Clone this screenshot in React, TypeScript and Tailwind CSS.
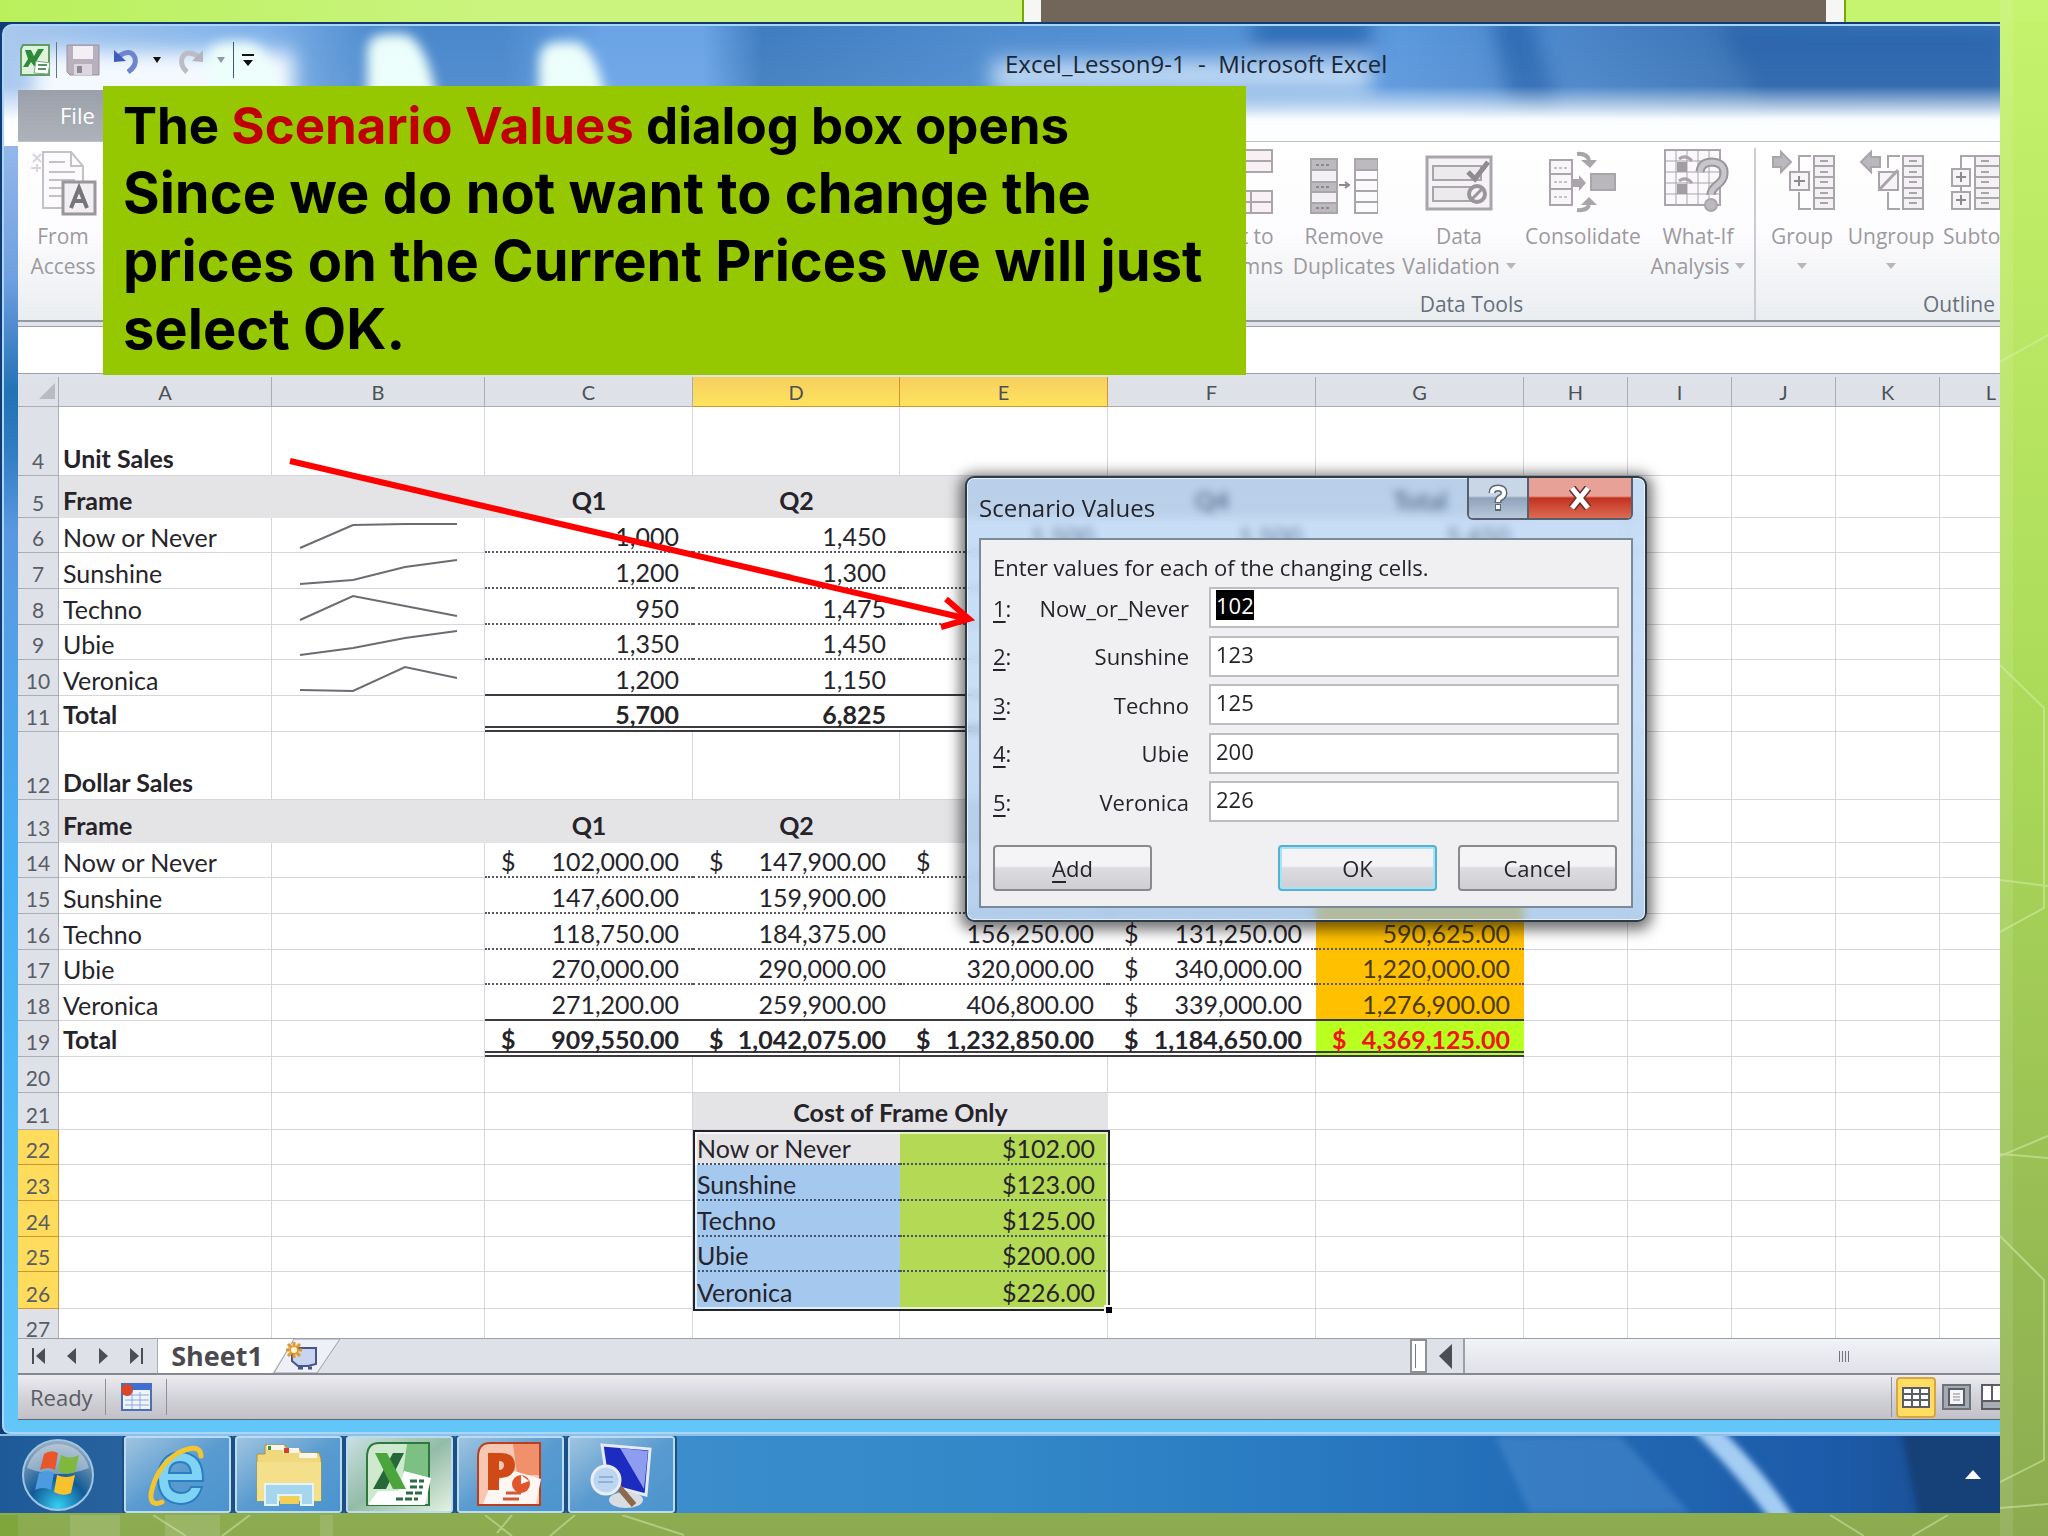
import { type ReactNode } from 'react';

type Row = {
    n: number;
    h: string;
    kind?: 'section' | 'head' | 'line' | 'total' | 'title' | 'cost';
    label?: string;
    cells?: string[];
    money?: boolean;
    spark?: string;
};

const columns = ['A', 'B', 'C', 'D', 'E', 'F', 'G', 'H', 'I', 'J', 'K', 'L'];

const rows: Row[] = [
    { n: 4, h: 'h-[69px]', kind: 'section', label: 'Unit Sales' },
    { n: 5, h: 'h-[42px]', kind: 'head', label: 'Frame', cells: ['Q1', 'Q2', '', 'Q4', 'Total'] },
    { n: 6, h: 'h-[35px]', kind: 'line', label: 'Now or Never', cells: ['1,000', '1,450', '1,500', '1,500', '5,450'], spark: '28,28 81,5 133,4 185,4' },
    { n: 7, h: 'h-[36px]', kind: 'line', label: 'Sunshine', cells: ['1,200', '1,300', '', '', ''], spark: '28,28 81,24 133,11 185,4' },
    { n: 8, h: 'h-[36px]', kind: 'line', label: 'Techno', cells: ['950', '1,475', '', '', ''], spark: '28,28 81,4 133,14 185,24' },
    { n: 9, h: 'h-[35px]', kind: 'line', label: 'Ubie', cells: ['1,350', '1,450', '', '', ''], spark: '28,28 81,21 133,11 185,4' },
    { n: 10, h: 'h-[36px]', kind: 'line', label: 'Veronica', cells: ['1,200', '1,150', '', '', ''], spark: '28,27 81,28 133,4 185,15' },
    { n: 11, h: 'h-[36px]', kind: 'total', label: 'Total', cells: ['5,700', '6,825', '', '', ''] },
    { n: 12, h: 'h-[68px]', kind: 'section', label: 'Dollar Sales' },
    { n: 13, h: 'h-[43px]', kind: 'head', label: 'Frame', cells: ['Q1', 'Q2', '', '', ''] },
    { n: 14, h: 'h-[35px]', kind: 'line', label: 'Now or Never', cells: ['$102,000.00', '$147,900.00', '$', '', ''], money: true },
    { n: 15, h: 'h-[36px]', kind: 'line', label: 'Sunshine', cells: ['147,600.00', '159,900.00', '', '', ''], money: true },
    { n: 16, h: 'h-[36px]', kind: 'line', label: 'Techno', cells: ['118,750.00', '184,375.00', '156,250.00', '$131,250.00', '590,625.00'], money: true },
    { n: 17, h: 'h-[35px]', kind: 'line', label: 'Ubie', cells: ['270,000.00', '290,000.00', '320,000.00', '$340,000.00', '1,220,000.00'], money: true },
    { n: 18, h: 'h-[36px]', kind: 'line', label: 'Veronica', cells: ['271,200.00', '259,900.00', '406,800.00', '$339,000.00', '1,276,900.00'], money: true },
    { n: 19, h: 'h-[36px]', kind: 'total', label: 'Total', cells: ['$909,550.00', '$1,042,075.00', '$1,232,850.00', '$1,184,650.00', '$4,369,125.00'], money: true },
    { n: 20, h: 'h-[36px]' },
    { n: 21, h: 'h-[37px]', kind: 'title', label: 'Cost of Frame Only' },
    { n: 22, h: 'h-[35px]', kind: 'cost', label: 'Now or Never', cells: ['$102.00'] },
    { n: 23, h: 'h-[36px]', kind: 'cost', label: 'Sunshine', cells: ['$123.00'] },
    { n: 24, h: 'h-[36px]', kind: 'cost', label: 'Techno', cells: ['$125.00'] },
    { n: 25, h: 'h-[35px]', kind: 'cost', label: 'Ubie', cells: ['$200.00'] },
    { n: 26, h: 'h-[37px]', kind: 'cost', label: 'Veronica', cells: ['$226.00'] },
    { n: 27, h: 'h-[35px]' },
];

const scenario = [
    { name: 'Now_or_Never', value: '102' },
    { name: 'Sunshine', value: '123' },
    { name: 'Techno', value: '125' },
    { name: 'Ubie', value: '200' },
    { name: 'Veronica', value: '226' },
];

const grid = 'border-r border-b border-[#d6d4dc]';

/* ---------- slide ---------- */

function SlideDecor() {
    return (
        <>
            <div className="absolute inset-x-0 top-0 flex h-[22px]">
                <div className="w-[1024px] border-r-2 border-[#78a800] bg-linear-to-r from-[#b9f05c] via-[#cbf47f] to-[#caf47d]"></div>
                <div className="w-[17px] bg-[#f6f6f4]"></div>
                <div className="w-[785px] bg-[#72665b]"></div>
                <div className="w-[18px] bg-[#f6f6f4]"></div>
                <div className="flex-1 border-l-2 border-[#78a800] bg-[#c6f370]"></div>
            </div>
            <svg className="absolute top-0 right-0 h-full w-12" viewBox="0 0 48 1536" preserveAspectRatio="none" fill="none">
                <rect width="13" height="1536" fill="#fff" opacity=".1" />
                <path d="M0 362 48 335M0 665 44 708V908L0 932M0 880 48 886M0 1156 48 1136M0 1154 48 1158M0 1236 44 1280V1460L0 1482M0 1508 48 1504" stroke="#d9efb0" strokeWidth="2" opacity=".5" />
            </svg>
            <svg className="absolute bottom-0 left-0 h-[21px] w-full" viewBox="0 0 2048 21" preserveAspectRatio="none" fill="none">
                <rect width="18" height="21" fill="#7fa63a" />
                <path d="M70 0H120V21H70zM165 0H220V21H165zM320 0H333V21H320z" fill="#fff" opacity=".12" />
                <path d="M153 0 186 21M250 0 222 21M485 0 512 21M512 0 497 18M575 0 550 21M622 0 684 20M1830 0 1864 21M1948 0 1912 21" stroke="#d5eab0" strokeWidth="2" opacity=".5" />
            </svg>
        </>
    );
}

function Note() {
    return (
        <div className="absolute top-[86px] left-[103px] w-[1143px] bg-[#95c800] px-5 pt-[7px] pb-[12px] font-['Inter',sans-serif] font-bold text-black">
            <p className="text-[51px] leading-[66px]">
                The <span className="text-[#c00000]">Scenario Values</span> dialog box opens
            </p>
            <p className="text-[56px] leading-[68px]">
                Since we do not want to change the
                <br />
                prices on the Current Prices we will just
                <br />
                select OK.
            </p>
        </div>
    );
}

function Arrow() {
    return (
        <svg className="pointer-events-none absolute top-[450px] left-[280px] h-[190px] w-[700px]" viewBox="0 0 700 190" fill="none" stroke="#fe0000" strokeWidth="6">
            <path d="M10 11 684 168M666 149 689 169 661 177" />
        </svg>
    );
}

/* ---------- window chrome ---------- */

function Glass() {
    return (
        <svg className="absolute inset-x-0 top-0 h-[120px] w-full" viewBox="0 0 2000 120" preserveAspectRatio="none">
            <defs>
                <filter id="soft" x="-20%" y="-40%" width="140%" height="180%">
                    <feGaussianBlur stdDeviation="10" />
                </filter>
                <filter id="glow" x="-20%" y="-40%" width="140%" height="180%">
                    <feGaussianBlur stdDeviation="6" />
                </filter>
                <linearGradient id="sky" x1="0" x2="1" y1="0" y2="0">
                    <stop offset="0" stopColor="#a9c8ee" />
                    <stop offset=".13" stopColor="#7fb2ea" />
                    <stop offset=".19" stopColor="#4a88cc" />
                    <stop offset=".25" stopColor="#4a88cc" />
                    <stop offset=".3" stopColor="#6aa4e6" />
                    <stop offset=".35" stopColor="#6aa4e6" />
                    <stop offset=".38" stopColor="#3f7cc0" />
                    <stop offset=".5" stopColor="#4f8dd0" />
                    <stop offset=".7" stopColor="#5a97dc" />
                    <stop offset=".87" stopColor="#3a74b6" />
                    <stop offset="1" stopColor="#3f7cc6" />
                </linearGradient>
                <linearGradient id="fade" x1="0" x2="0" y1="0" y2="1">
                    <stop offset="0" stopColor="#fff" stopOpacity="0" />
                    <stop offset=".5" stopColor="#f6fbff" stopOpacity=".05" />
                    <stop offset=".78" stopColor="#fafdff" />
                    <stop offset="1" stopColor="#fff" />
                </linearGradient>
            </defs>
            <rect width="2000" height="120" fill="url(#sky)" />
            <g filter="url(#soft)">
                <path d="M1720 0H2010V85H1760z" fill="#2a65ac" />
                <path d="M1250 -10H1370V20H1250zM1490 -10H1530L1560 85H1510z" fill="#2f6cb4" />
                <path d="M30 26H290V130H30z" fill="#f4f9ff" />
                <path d="M990 34H1370V66H990z" fill="#d3e6fa" opacity=".8" />
            </g>
            <g filter="url(#glow)" fill="#ecfefb">
                <path d="M205 130V30Q205 16 230 16H245Q278 22 284 130z" />
                <path d="M364 130V26Q364 8 384 8H402Q434 20 438 130z" />
                <path d="M536 130V36Q536 16 556 16H574Q604 28 608 130z" />
            </g>
            <rect width="2000" height="120" fill="url(#fade)" />
        </svg>
    );
}

function TitleBar() {
    return (
        <div className="relative flex h-[64px] items-center pt-1 pl-0.5">
            <svg className="h-8 w-8" viewBox="0 0 32 32">
                <path d="M3 1H29V31H1V5z" fill="#dff2dc" stroke="#5f9c66" strokeWidth="2" />
                <path d="M5 6H11L14 12 18 5H24L17 16 20 22H14L11 18 8 23H3L8 15z" fill="#2f8a3c" />
                <path d="M16 17 30 19 28 30 14 29z" fill="#fff" stroke="#7cab80" />
                <path d="M18 21H27M18 25H26" stroke="#58925e" strokeWidth="2" />
            </svg>
            <span className="mx-1 h-9 w-px bg-slate-500"></span>
            <button aria-label="Save" className="ml-1">
                <svg className="h-8 w-9" viewBox="0 0 36 32">
                    <path d="M2 1H34V31H5L2 28z" fill="#b9b0bd" stroke="#9a929f" />
                    <path d="M8 2H28V15H8z" fill="#f3f0f5" />
                    <path d="M9 20H27V31H9z" fill="#dcd6e0" />
                    <path d="M12 22H17V29H12z" fill="#8f8795" />
                </svg>
            </button>
            <button aria-label="Undo" className="ml-3 flex items-center gap-3">
                <svg className="h-8 w-7" viewBox="0 0 28 32" fill="none">
                    <path d="M6 12Q18 4 22 14 24 22 15 28" stroke="#6d84cf" strokeWidth="5" />
                    <path d="M1 6V18L13 17z" fill="#3f5cba" />
                </svg>
                <svg className="h-2 w-2" viewBox="0 0 8 8"><path d="M0 1H8L4 7z" fill="#111" /></svg>
            </button>
            <button aria-label="Redo" className="ml-4 flex items-center gap-3">
                <svg className="h-8 w-7" viewBox="0 0 28 32" fill="none">
                    <path d="M21 12Q9 5 5 14 3 22 10 28" stroke="#bcbcc6" strokeWidth="5" />
                    <path d="M26 6V18L15 17z" fill="#b4b4be" />
                </svg>
                <svg className="h-2 w-2" viewBox="0 0 8 8"><path d="M0 1H8L4 7z" fill="#8d9aa8" /></svg>
            </button>
            <span className="ml-2 h-9 w-px bg-slate-600"></span>
            <button aria-label="Customize Quick Access Toolbar" className="ml-2">
                <svg className="h-4 w-3" viewBox="0 0 12 16"><path d="M0 2H12V4H0zM1 8H11L6 14z" fill="#111" /></svg>
            </button>
            <h1 className="ml-[751px] pt-2 font-['Open_Sans',sans-serif] text-[24px] leading-8 whitespace-pre text-[#1c2634]">Excel_Lesson9-1  -  Microsoft Excel</h1>
        </div>
    );
}

function RibbonItem({ width, icon, line1, line2, arrow }: { width: string; icon: ReactNode; line1: string; line2?: string; arrow?: boolean }) {
    return (
        <button className={`${width} flex shrink-0 flex-col items-center whitespace-nowrap`}>
            <svg className="h-[68px] w-[68px]" viewBox="0 0 68 68" fill="none" stroke="#a9a5ab" strokeWidth="2">
                {icon}
            </svg>
            <span className="mt-[5px] text-[21px] leading-[30px]">{line1}</span>
            <span className="flex h-[30px] items-center gap-[6px] text-[21px] leading-[30px]">
                {line2}
                {arrow && (
                    <svg className="h-[6px] w-[10px]" viewBox="0 0 10 6"><path d="M0 0H10L5 6z" fill="#b7b7bb" /></svg>
                )}
            </span>
        </button>
    );
}

const outlineColumn = (
    <>
        <path d="M46 8H66V61H46z" fill="#f3f1f4" />
        <path d="M46 18H66M46 29H66M46 40H66M46 50H66M52 13H60M52 24H60M52 34H60M52 45H60M52 55H60" />
    </>
);

function Ribbon() {
    return (
        <div className="flex h-[181px] overflow-hidden border-t border-b-2 border-t-[#bcc2ca] border-b-[#94999f] bg-linear-to-b from-white via-[#fdfcfe] to-[#eaedf0] pt-[6px] font-['Open_Sans',sans-serif] text-[#9c9a9e]">
            <div className="w-[1171px] shrink-0">
                <RibbonItem
                    width="w-[90px]"
                    line1="From"
                    line2="Access"
                    icon={
                        <>
                            <path d="M14 4H42L54 18V60H14z" fill="#fbfafc" stroke="#c4c0c6" />
                            <path d="M42 4V18H54M20 14H36M20 24H46M20 32H46M20 40H40M20 48H36" stroke="#c4c0c6" />
                            <path d="M4 6 12 14M12 6 4 14M2 20H12M8 16V24" stroke="#d8d4da" />
                            <path d="M34 34H66V66H34z" fill="#f1eff2" stroke="#9a969c" strokeWidth="3" />
                            <path d="M42 60 50 40 58 60M45 53H55" stroke="#77747a" strokeWidth="4" />
                        </>
                    }
                />
            </div>
            <div className="flex w-[567px] shrink-0 flex-col border-r-2 border-[#c9ccd2]">
                <div className="flex h-[141px]">
                    <RibbonItem
                        width="w-[102px]"
                        line1="Text to"
                        line2="Columns"
                        icon={
                            <>
                                <path d="M4 2H66V24H4zM4 43H66V65H4z" fill="#f8f0f3" />
                                <path d="M4 13H66M4 54H66M24 43V65M45 43V65M34 26V38M30 34 34 39 38 34" />
                            </>
                        }
                    />
                    <RibbonItem
                        width="w-[106px]"
                        line1="Remove"
                        line2="Duplicates"
                        icon={
                            <>
                                <path d="M1 11H27V65H1z" fill="#f2f0f3" />
                                <path d="M1 11H27V22H1zM1 34H27V44H1zM1 55H27V65H1z" fill="#bdbabf" />
                                <path d="M6 17H21M6 39H21M6 60H21" stroke="#8d898f" strokeDasharray="3 2" />
                                <path d="M45 11H68V65H45z" fill="#fbfafc" />
                                <path d="M45 11H68V22H45z" fill="#bdbabf" />
                                <path d="M45 32H68M45 43H68M45 54H68" />
                                <path d="M29 37H38M35 34 39 37 35 40" stroke="#8d898f" />
                            </>
                        }
                    />
                    <RibbonItem
                        width="w-[124px]"
                        line1="Data"
                        line2="Validation"
                        arrow
                        icon={
                            <>
                                <path d="M2 9H66V61H2z" fill="#f4f2f5" strokeWidth="3" />
                                <path d="M8 18H56V32H8zM8 39H46V53H8z" fill="#eceaed" />
                                <path d="M43 24 50 31 63 14" stroke="#8f8b91" strokeWidth="5" />
                                <circle cx="52" cy="46" r="8" stroke="#99959b" strokeWidth="4" fill="#f4f2f5" />
                                <path d="M47 51 57 41" stroke="#99959b" strokeWidth="3" />
                            </>
                        }
                    />
                    <RibbonItem
                        width="w-[124px]"
                        line1="Consolidate"
                        icon={
                            <>
                                <path d="M1 12H23V57H1z" fill="#f8f6f9" />
                                <path d="M1 26H23M1 41H23" />
                                <path d="M5 20H18M5 34H18M5 49H18" strokeDasharray="3 2" stroke="#c6c2c8" />
                                <path d="M24 31H30V27L37 35 30 43V39H24z" fill="#a9a5ab" stroke="none" />
                                <path d="M42 26H66V42H42z" fill="#bab7bc" />
                                <path d="M28 6Q38 5 40 12" strokeWidth="4" />
                                <path d="M32 12H48L41 20z" fill="#a9a5ab" stroke="none" />
                                <path d="M28 62Q38 63 40 57" strokeWidth="4" />
                                <path d="M32 57H48L40 49z" fill="#a9a5ab" stroke="none" />
                            </>
                        }
                    />
                    <RibbonItem
                        width="w-[106px]"
                        line1="What-If"
                        line2="Analysis"
                        arrow
                        icon={
                            <>
                                <path d="M1 2H56V57H1z" fill="#faf8fb" />
                                <path d="M1 13H56M1 24H56M1 35H56M1 46H56M12 2V57M23 2V57M34 2V57M45 2V57" strokeWidth="1" />
                                <path d="M13 14H23V24H13zM13 36H23V46H13z" fill="#a19da3" stroke="none" />
                                <path d="M15 11Q22 6 28 13M15 33Q22 28 28 35" strokeWidth="3" />
                                <path d="M36 24Q37 14 48 14 61 15 60 26 60 32 52 38 47 42 47 47" stroke="#99959b" strokeWidth="9" />
                                <path d="M36 24Q37 14 48 14 61 15 60 26 60 32 52 38 47 42 47 47" stroke="#c9c6cb" strokeWidth="5" />
                                <circle cx="47" cy="57" r="6" fill="#bcb9be" />
                            </>
                        }
                    />
                </div>
                <span className="text-center text-[21px] leading-[30px] text-[#66707c]">Data Tools</span>
            </div>
            <div className="flex w-[406px] shrink-0 flex-col">
                <div className="flex h-[141px] pl-[3px]">
                    <RibbonItem
                        width="w-[86px]"
                        line1="Group"
                        arrow
                        icon={
                            <>
                                <path d="M5 9H13V4L23 14 13 24V19H5z" fill="#bbb8bd" />
                                <path d="M43 8H31V24M31 44V61H43" />
                                <path d="M22 24H41V42H22z" fill="#f6f4f7" />
                                <path d="M26 33H37M31 28V38" stroke="#8d898f" />
                                {outlineColumn}
                            </>
                        }
                    />
                    <RibbonItem
                        width="w-[92px]"
                        line1="Ungroup"
                        arrow
                        icon={
                            <>
                                <path d="M23 9H14V4L4 14 14 24V19H23z" fill="#bbb8bd" />
                                <path d="M43 8H31V20M31 44V61H43" />
                                <path d="M22 24H41V42H22z" fill="#f6f4f7" />
                                <path d="M22 42 41 22" strokeWidth="3" />
                                {outlineColumn}
                            </>
                        }
                    />
                    <RibbonItem
                        width="w-[94px]"
                        line1="Subtotal"
                        icon={
                            <>
                                <path d="M24 8H11V60" />
                                <path d="M2 21H20V38H2zM2 44H20V61H2z" fill="#f6f4f7" />
                                <path d="M6 29H16M11 24V34M6 52H16M11 47V57" stroke="#8d898f" />
                                <path d="M25 8H50V61H25z" fill="#f3f1f4" />
                                <path d="M25 18H50M25 29H50M25 40H50M25 50H50M31 13H39M31 24H39M31 34H39M31 45H39M31 55H39" />
                            </>
                        }
                    />
                </div>
                <span className="text-center text-[21px] leading-[30px] text-[#66707c]">Outline</span>
            </div>
        </div>
    );
}

/* ---------- sheet ---------- */

function Amount({ text }: { text: string }) {
    const dollar = text.startsWith('$');
    return (
        <div className="flex justify-between pl-4">
            <span>{dollar ? '$' : ''}</span>
            <span>{dollar ? text.slice(1) : text}</span>
        </div>
    );
}

function RowCells({ row }: { row: Row }) {
    const { kind, label, cells = [], money, spark } = row;

    if (kind === 'title') {
        return (
            <>
                {columns.slice(0, 3).map((c) => <td key={c} className={grid}></td>)}
                <td colSpan={2} className="border-b border-[#d6d4dc] bg-[#e4e3e6] pb-0.5 text-center font-bold">{label}</td>
                {columns.slice(5).map((c) => <td key={c} className={grid}></td>)}
            </>
        );
    }

    if (kind === 'cost') {
        const first = row.n === 22;
        const edge = row.n === 26 ? 'pb-0.5' : 'border-b-2 border-dotted border-[#44566a]';
        return (
            <>
                {columns.slice(0, 3).map((c) => <td key={c} className={grid}></td>)}
                <td className={`relative pl-[4px] ${edge} ${first ? 'bg-[#e4e3e6]' : 'bg-[#a4c8ee]'}`}>
                    {label}
                    {first && (
                        <span className="pointer-events-none absolute top-0 left-0 z-10 h-[181px] w-[417px] border-2 border-[#22222a] shadow-[inset_0_0_0_2px_#ffffffaa]">
                            <span className="absolute -right-1 -bottom-1 h-2 w-2 border-t-2 border-l-2 border-white bg-black"></span>
                        </span>
                    )}
                </td>
                <td className={`bg-[#b4da55] pr-[13px] text-right ${edge}`}>{cells[0]}</td>
                {columns.slice(5).map((c) => <td key={c} className={grid}></td>)}
            </>
        );
    }

    if (kind === 'head') {
        return (
            <>
                <td className="bg-[#e4e3e6] pb-[3px] pl-[4px] font-bold">{label}</td>
                <td className="bg-[#e4e3e6]"></td>
                {cells.map((c, i) => <td key={i} className="bg-[#e4e3e6] pb-[3px] text-center font-bold">{c}</td>)}
                {columns.slice(7).map((c) => <td key={c} className={grid}></td>)}
            </>
        );
    }

    if (kind === 'line' || kind === 'total') {
        const total = kind === 'total';
        const solid = row.n === 10 || row.n === 18;
        const line = total
            ? 'border-b-[6px] border-double border-[#3c393f] leading-[23px] font-bold'
            : solid
              ? 'border-b-2 border-[#3c393f]'
              : 'border-b-2 border-dotted border-[#5a585e]';
        return (
            <>
                <td className={`${grid} pl-[4px] ${total ? 'pb-0.5 font-bold' : ''}`}>{label}</td>
                <td className={grid}>
                    {spark && (
                        <svg className="block h-[32px] w-[212px]" viewBox="0 0 212 32" fill="none">
                            <polyline points={spark} stroke="#6d6b72" strokeWidth="2" />
                        </svg>
                    )}
                </td>
                {cells.map((c, i) => {
                    const fill = money && i === 4 ? (total ? 'bg-[#b9ff1f] text-[#f01414]' : 'bg-[#ffc000] text-[#4a3a10]') : '';
                    return (
                        <td key={i} className={`${line} ${fill} pr-[14px] text-right`}>
                            {money ? <Amount text={c} /> : c}
                        </td>
                    );
                })}
                {columns.slice(7).map((c) => <td key={c} className={grid}></td>)}
            </>
        );
    }

    return (
        <>
            {columns.map((c, i) => (
                <td key={c} className={`${grid} ${i === 0 ? 'pb-0.5 pl-[4px] font-bold whitespace-nowrap' : ''}`}>{i === 0 ? label : ''}</td>
            ))}
        </>
    );
}

function Sheet() {
    return (
        <div className="overflow-hidden bg-white">
            <table className="w-full min-w-[2025px] table-fixed border-separate border-spacing-0 font-['Lato',sans-serif] text-[25px] leading-[29px] text-[#26242a]">
                <colgroup>
                    <col className="w-[41px]" />
                    <col className="w-[213px]" />
                    <col className="w-[213px]" />
                    <col className="w-[208px]" />
                    <col className="w-[207px]" />
                    <col className="w-[208px]" />
                    <col className="w-[208px]" />
                    <col className="w-[208px]" />
                    <col className="w-[104px]" />
                    <col className="w-[104px]" />
                    <col className="w-[104px]" />
                    <col className="w-[104px]" />
                    <col />
                </colgroup>
                <thead>
                    <tr className="h-[30px] text-[20px] leading-[26px] text-[#4c5158]">
                        <th className="border-r border-b border-[#a9adb5] bg-[#dfe1e8] p-0">
                            <svg className="ml-auto h-[18px] w-[20px]" viewBox="0 0 20 18"><path d="M17 0V16H1z" fill="#b8bbc3" /></svg>
                        </th>
                        {columns.map((c) => (
                            <th
                                key={c}
                                scope="col"
                                className={`border-r border-b p-0 font-normal ${c === 'D' || c === 'E' ? 'border-[#d3942f] bg-linear-to-b from-[#f6cf5f] to-[#ffe45f]' : 'border-[#a9adb5] bg-[#dfe1e8]'}`}
                            >
                                {c}
                            </th>
                        ))}
                    </tr>
                </thead>
                <tbody>
                    {rows.map((row) => (
                        <tr key={row.n} className={`${row.h} [&>td]:align-bottom`}>
                            <th
                                scope="row"
                                className={`border-r border-b p-0 text-center align-bottom text-[21px] font-normal text-[#585d66] ${row.n > 21 && row.n < 27 ? 'border-[#d3942f] bg-[#ffdc5c]' : 'border-[#a9adb5] bg-[#dfe1e8]'}`}
                            >
                                {row.n}
                            </th>
                            <RowCells row={row} />
                        </tr>
                    ))}
                </tbody>
            </table>
        </div>
    );
}

function SheetTabs() {
    return (
        <div className="relative -mt-[6px] flex h-[37px] overflow-hidden border-t border-b-2 border-t-[#9b9fa8] border-b-[#85888f] bg-[#dee1e8]">
            <div className="flex w-[140px] shrink-0 items-center justify-around border-r border-[#a9adb5] px-1">
                <button aria-label="First sheet"><svg className="h-4 w-3.5" viewBox="0 0 14 16"><path d="M0 0H2V16H0zM13 0V16L4 8z" fill="#4b4e55" /></svg></button>
                <button aria-label="Previous sheet"><svg className="h-4 w-2.5" viewBox="0 0 10 16"><path d="M9 0V16L0 8z" fill="#4b4e55" /></svg></button>
                <button aria-label="Next sheet"><svg className="h-4 w-2.5" viewBox="0 0 10 16"><path d="M1 0V16L10 8z" fill="#4b4e55" /></svg></button>
                <button aria-label="Last sheet"><svg className="h-4 w-3.5" viewBox="0 0 14 16"><path d="M12 0H14V16H12zM1 0V16L10 8z" fill="#4b4e55" /></svg></button>
            </div>
            <button className="w-[114px] shrink-0 bg-white pl-1 font-['Open_Sans',sans-serif] text-[27px] leading-[32px] font-bold text-[#4a4a50]">Sheet1</button>
            <button aria-label="Insert worksheet" className="shrink-0">
                <svg className="h-[34px] w-[70px]" viewBox="0 0 70 34" fill="none">
                    <path d="M22 0 0 34V0z" fill="#fff" />
                    <path d="M22 0 2 34H45L68 0z" fill="#eef0f6" stroke="#9b9fa8" />
                    <path d="M20 9H44V25L36 27H26L20 22z" fill="#c9d5ef" stroke="#46558c" strokeWidth="2" />
                    <path d="M26 29H31M36 29H40" stroke="#46558c" strokeWidth="3" />
                    <path d="M22 3V19M14 11H30M16 5 28 17M28 5 16 17" stroke="#e09a2c" strokeWidth="3" />
                    <circle cx="22" cy="11" r="3" fill="#fff6d6" />
                </svg>
            </button>
            <div className="w-[1068px] shrink-0"></div>
            <div className="w-[17px] shrink-0 border-2 border-[#8e9096] bg-white p-[3px]">
                <div className="h-full w-px bg-[#77797f]"></div>
            </div>
            <button aria-label="Scroll left" className="flex w-[36px] shrink-0 items-center justify-center">
                <svg className="h-[25px] w-[13px]" viewBox="0 0 13 25"><path d="M13 0V25L0 12z" fill="#4b4e55" /></svg>
            </button>
            <div className="flex flex-1 items-center border-l-2 border-[#9b9fa8] bg-linear-to-b from-[#f2f3f8] to-[#e0e1e8] pl-[374px]">
                <svg className="h-[11px] w-[11px]" viewBox="0 0 11 11"><path d="M0 0H1V11H0zM3 0H4V11H3zM6 0H7V11H6zM9 0H10V11H9z" fill="#73757c" /></svg>
            </div>
        </div>
    );
}

function StatusBar() {
    return (
        <div className="flex h-[45px] items-center overflow-hidden border-b border-[#5c6470] bg-linear-to-b from-[#ececf0] via-[#d3d3da] to-[#c2c1c7]">
            <span className="pl-3 font-['Open_Sans',sans-serif] text-[22px] leading-8 text-[#5a5c64]">Ready</span>
            <span className="ml-3 h-9 w-px bg-[#8f9198]"></span>
            <button aria-label="Record macro" className="mx-[14px]">
                <svg className="h-7 w-8" viewBox="0 0 32 28">
                    <path d="M2 1H31V27H2z" fill="#eef3fc" stroke="#4a6fb5" strokeWidth="2" />
                    <path d="M2 1H31V7H2z" fill="#3f6fd0" />
                    <path d="M5 12H29M5 17H29M5 22H29M12 9V26M20 9V26" stroke="#8fa9d8" />
                    <circle cx="7" cy="7" r="6" fill="#d8452c" />
                </svg>
            </button>
            <span className="h-9 w-px bg-[#8f9198]"></span>
            <div className="ml-auto flex items-center">
                <span className="mr-1 h-10 w-px bg-[#8f9198]"></span>
                <button aria-label="Normal view" className="flex h-[41px] w-10 items-center justify-center rounded border-2 border-[#d8a545] bg-[#ffdd62]">
                    <svg className="h-[21px] w-7" viewBox="0 0 28 21"><path d="M1 1H27V20H1zM1 7H27M1 13H27M10 1V20M18 1V20" fill="#fff" stroke="#5a5d68" strokeWidth="2" /></svg>
                </button>
                <button aria-label="Page layout view" className="ml-[6px]">
                    <svg className="h-[26px] w-[29px]" viewBox="0 0 29 26">
                        <path d="M1 1H28V25H1z" fill="#a4aab2" stroke="#6d737c" strokeWidth="2" />
                        <path d="M7 5H22V21H7z" fill="#f6f6f8" stroke="#5a5d68" strokeWidth="2" />
                        <path d="M11 10H18M11 13H18M11 16H18" stroke="#83868e" />
                    </svg>
                </button>
                <button aria-label="Page break preview" className="ml-[10px] w-[19px] overflow-hidden">
                    <svg className="h-[26px] w-[29px]" viewBox="0 0 29 26">
                        <path d="M1 1H28V25H1z" fill="#a9acb2" stroke="#5a5d68" strokeWidth="2" />
                        <path d="M1 1H11V17H1zM11 1H28V17H11z" fill="#fff" stroke="#5a5d68" strokeWidth="2" />
                    </svg>
                </button>
            </div>
        </div>
    );
}

/* ---------- dialog ---------- */

const dialogButton = 'h-[46px] w-[159px] rounded-[4px] border-2 bg-linear-to-b from-[#f4f3f5] from-45% via-[#dddce0] via-50% to-[#cfced3]';

function ScenarioDialog() {
    return (
        <div
            role="dialog"
            aria-labelledby="scenario-title"
            className="absolute top-[476px] left-[965px] w-[682px] rounded-[9px] border-2 border-[#2d3a48] bg-linear-to-b from-[#8fbbec80] via-[#b4d3f3b8] to-[#94bbe4b0] px-3 pb-3 font-['Open_Sans',sans-serif] text-[#24242a] shadow-[0_3px_14px_5px_#0000008c,inset_0_0_0_1px_#ffffffb0] backdrop-blur-[4px]"
        >
            <div className="flex h-[60px] items-start">
                <h2 id="scenario-title" className="pt-[14px] text-[24px] leading-8">Scenario Values</h2>
                <div className="ml-auto flex h-[42px] overflow-hidden rounded-b-[6px] border-2 border-t-0 border-[#56606e]">
                    <button aria-label="Help" className="flex w-[60px] items-center justify-center border-r-2 border-[#56606e] bg-linear-to-b from-[#c8d6e6] from-45% via-[#8fa3bb] via-50% to-[#b9c8da]">
                        <svg className="h-7 w-5" viewBox="0 0 20 28" fill="none">
                            <path d="M4 9Q4 4 10 4 16 4 16 9 16 12 12 14 10 15 10 19" stroke="#5d6673" strokeWidth="7" />
                            <path d="M7 20H13V27H7z" fill="#5d6673" />
                            <path d="M4 9Q4 4 10 4 16 4 16 9 16 12 12 14 10 15 10 18" stroke="#fff" strokeWidth="4" />
                            <path d="M8 21H12V25H8z" fill="#fff" />
                        </svg>
                    </button>
                    <button aria-label="Close" className="flex w-[102px] items-center justify-center bg-linear-to-b from-[#e8a196] from-45% via-[#c2301e] via-50% to-[#dc6a52]">
                        <svg className="h-6 w-7" viewBox="0 0 28 24" fill="none">
                            <path d="M6 2 22 22M22 2 6 22" stroke="#6b3030" strokeWidth="8" />
                            <path d="M6 2 22 22M22 2 6 22" stroke="#fff" strokeWidth="5" />
                        </svg>
                    </button>
                </div>
            </div>
            <form className="border-2 border-[#7b8998] bg-[#f0eff1] px-3 pt-3 pb-[15px] text-[22px]">
                <p className="h-[35px] leading-[30px]">Enter values for each of the changing cells.</p>
                <div className="flex h-[235px] flex-col justify-between">
                    {scenario.map((s, i) => (
                        <div key={s.name} className="flex h-[41px] items-center">
                            <label htmlFor={s.name} className="flex w-[196px] justify-between leading-8">
                                <span><u className="underline-offset-4">{i + 1}</u>:</span>
                                <span>{s.name}</span>
                            </label>
                            <input
                                id={s.name}
                                defaultValue={s.value}
                                autoFocus={i === 0}
                                onFocus={(e) => e.currentTarget.select()}
                                className="ml-5 h-full flex-1 border-2 border-[#bdbcc2] bg-white px-[5px] pb-[5px] outline-none selection:bg-black selection:text-white"
                            />
                        </div>
                    ))}
                </div>
                <div className="mt-[23px] flex pr-0.5">
                    <button type="button" className={`${dialogButton} border-[#8a898f]`}><u className="underline-offset-4">A</u>dd</button>
                    <button type="button" className={`${dialogButton} ml-auto border-[#56b0cf] shadow-[inset_0_0_0_2px_#a5e3f5]`}>OK</button>
                    <button type="button" className={`${dialogButton} ml-[21px] border-[#8a898f]`}>Cancel</button>
                </div>
            </form>
        </div>
    );
}

/* ---------- taskbar ---------- */

function TaskButton({ label, active, children }: { label: string; active?: boolean; children: ReactNode }) {
    return (
        <button
            aria-label={label}
            className={`flex h-full w-[107px] items-center justify-center rounded-[3px] border-2 border-[#b9dcf0] outline-2 outline-[#1d4e86] ${active ? 'bg-linear-to-br from-[#c8dfe0] via-[#93bca8] to-[#e4f1e0]' : 'bg-linear-to-br from-[#9fc4df] via-[#5a9bd0] to-[#4a94cf]'}`}
        >
            <svg className="h-[72px] w-[76px]" viewBox="0 0 76 72" fill="none">
                {children}
            </svg>
        </button>
    );
}

function Taskbar() {
    return (
        <div className="relative flex h-[79px] items-stretch overflow-hidden border-t-2 border-[#8cc0ea] bg-[linear-gradient(90deg,#1f5a98_0%,#27629f_6%,#3b8dcb_34%,#3288c8_50%,#2878c0_67%,#1c5aa8_92%,#1a4a8a_100%)]">
            <svg className="absolute top-0 right-0 h-full w-[700px]" viewBox="0 0 700 77" preserveAspectRatio="none">
                <defs>
                    <filter id="ray"><feGaussianBlur stdDeviation="3" /></filter>
                </defs>
                <path d="M195 0H320L390 77H230z" fill="#4d8fd2" opacity=".5" filter="url(#ray)" />
                <path d="M382 -16H412Q470 40 500 92H476Q440 40 382 -16z" fill="#a4cdf4" filter="url(#ray)" />
                <path d="M600 -10H720V90H620z" fill="#163f78" filter="url(#ray)" />
            </svg>
            <button aria-label="Start" className="relative w-[124px] shrink-0 pl-[21px]">
                <svg className="h-[74px] w-[74px]" viewBox="0 0 74 74">
                    <defs>
                        <radialGradient id="orb" cx=".5" cy=".95" r=".9">
                            <stop offset="0" stopColor="#35d0f5" />
                            <stop offset=".45" stopColor="#125a96" />
                            <stop offset="1" stopColor="#93a9bf" />
                        </radialGradient>
                    </defs>
                    <circle cx="37" cy="37" r="35" fill="url(#orb)" stroke="#9ec6e4" strokeWidth="2" />
                    <path d="M6 30A32 32 0 0 1 68 30Q37 42 6 30z" fill="#dfe8f0" opacity=".45" />
                    <path d="M23 16Q30 11 37 15L34 32Q27 28 19 32z" fill="#e8562a" />
                    <path d="M40 17Q49 22 58 17L54 34Q46 38 37 33z" fill="#7fb83c" />
                    <path d="M18 35Q26 31 33 35L30 52Q22 48 14 52z" fill="#4c9be0" />
                    <path d="M36 37Q45 41 54 37L50 55Q42 59 33 54z" fill="#f8c22c" />
                </svg>
            </button>
            <div className="relative flex gap-[4px]">
                <TaskButton label="Internet Explorer">
                    <path d="M63 42H29Q30 54 41 54 49 54 51 48H62Q57 65 40 65 18 63 18 39 19 14 41 13 64 15 63 42zM29 34H51Q50 23 40 23 30 23 29 34z" fill="#7fd3f5" stroke="#2a7fc0" strokeWidth="2" fillRule="evenodd" />
                    <path d="M61 17Q60 3 38 14 16 28 11 55 10 68 22 63" stroke="#f3c630" strokeWidth="5" strokeLinecap="round" />
                </TaskButton>
                <TaskButton label="Windows Explorer">
                    <path d="M6 15H14V6H34L36 10H48L51 14H68L70 20V62H6z" fill="#f0d87c" stroke="#b3953c" />
                    <path d="M16 6H33V11H16zM32 9H48V14H32zM48 14H66V19H48z" fill="#f8f6ea" />
                    <path d="M17 7H20V11H17z" fill="#3f8f3a" />
                    <path d="M33 9H38V14H33z" fill="#d2402c" />
                    <path d="M6 23H70V62H6z" fill="#f4df8b" />
                    <path d="M14 45H62V66H50V56H27V66H14z" fill="#a6d5ee" stroke="#e4f4fb" strokeWidth="2" />
                    <path d="M29 57H48V65H29z" fill="#f2cf58" />
                </TaskButton>
                <TaskButton label="Microsoft Excel" active>
                    <path d="M17 4H67V66H5V18Q5 4 17 4z" fill="#cfe9cf" stroke="#2b7a3b" strokeWidth="2" />
                    <path d="M45 5H66V42H40z" fill="#7cc084" />
                    <path d="M31 14H42L24 50H11z" fill="#27683a" />
                    <path d="M42 32 69 39 63 66H6L16 52H36z" fill="#fff" />
                    <path d="M13 14H25L44 50H31z" fill="#4aa63c" />
                    <path d="M48 42H62M48 48H61M44 54H60M34 60H56" stroke="#2d6b42" strokeWidth="3" strokeDasharray="7 2" />
                </TaskButton>
                <TaskButton label="Microsoft PowerPoint">
                    <path d="M17 4H67V66H5V18Q5 4 17 4z" fill="#f7c7b2" stroke="#b8401f" strokeWidth="2" />
                    <path d="M40 5H66V36H44z" fill="#f0916c" />
                    <path d="M38 31 68 40 63 65H10L16 50z" fill="#fdf6f2" />
                    <path d="M15 14H28Q42 14 42 27 41 39 26 39V51H15zM26 22V31Q31 31 31 26 31 22 26 22z" fill="#cf4a16" />
                    <circle cx="48" cy="45" r="9" fill="#e2552c" />
                    <path d="M48 45V36L56 42z" fill="#fff" />
                    <path d="M33 54H48M30 60H46" stroke="#cf5a3a" strokeWidth="3" />
                </TaskButton>
                <TaskButton label="Magnifier">
                    <path d="M18 6 66 10 62 56 24 46z" fill="#1c2bc0" stroke="#e4eaf6" strokeWidth="3" />
                    <path d="M36 9 64 12 60 50z" fill="#8f9df0" />
                    <ellipse cx="42" cy="61" rx="17" ry="8" fill="#d9dce0" />
                    <path d="M33 46 50 66" stroke="#8a6a4a" strokeWidth="6" />
                    <circle cx="22" cy="41" r="14" fill="#bcd5f0" stroke="#e9eef6" strokeWidth="3" />
                    <path d="M15 38H29M14 43H29" stroke="#8fb1dc" strokeWidth="2" />
                </TaskButton>
            </div>
            <button aria-label="Show hidden icons" className="relative ml-auto pr-[19px]">
                <svg className="h-[9px] w-4" viewBox="0 0 16 9"><path d="M0 9H16L8 0z" fill="#fff" /></svg>
            </button>
        </div>
    );
}

export default function App() {
    return (
        <div className="relative min-h-screen w-full overflow-hidden bg-linear-to-b from-[#c5f36c] via-[#a9d858] to-[#8cab50] pt-[22px] pr-12 pb-[21px]">
            <SlideDecor />
            <div className="relative bg-[#123a74] pt-[2px]">
                <div className="relative ml-[2px] overflow-hidden rounded-tl-[10px] rounded-bl-[8px] border-t-2 border-b-2 border-l-2 border-[#a9d6f6] bg-[linear-gradient(180deg,#b4cdf2_0%,#6f9fe0_18%,#2272b4_26%,#2f7cc0_30%,#5a98e0_36%,#45b0f5_60%,#62c6f8_100%)] pb-[12px] pl-[14px]">
                    <Glass />
                    <TitleBar />
                    <div className="relative flex h-[51px]">
                        <button className="w-[114px] bg-linear-to-b from-[#9aa0aa] to-[#aeb2bb] pl-[42px] text-left font-['Open_Sans',sans-serif] text-[22px] text-white">File</button>
                    </div>
                    <div className="relative">
                        <Ribbon />
                        <div className="border-t-[4px] border-b-[3px] border-[#dfe2e8] bg-[#9b9fa6] py-px">
                            <div className="h-[46px] bg-white"></div>
                        </div>
                        <Sheet />
                        <SheetTabs />
                        <StatusBar />
                    </div>
                </div>
                <Taskbar />
            </div>
            <ScenarioDialog />
            <Arrow />
            <Note />
        </div>
    );
}
